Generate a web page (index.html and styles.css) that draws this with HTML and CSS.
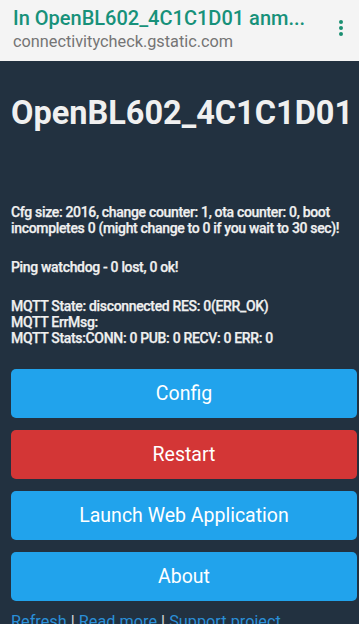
FILE: index.html
```html
<!DOCTYPE html>
<html>
<head>
<meta charset="utf-8">
<link rel="stylesheet" href="styles.css">
</head>
<body>
<header class="appbar">
  <div class="appbar-text">
    <div class="appbar-title">In OpenBL602_4C1C1D01 anm...</div>
    <div class="appbar-url">connectivitycheck.gstatic.com</div>
  </div>
  <div class="menu"><span></span><span></span><span></span></div>
</header>
<main class="page">
  <h1 class="title">OpenBL602_4C1C1D01</h1>
  <div class="info">
    <p>Cfg size: 2016, change counter: 1, ota counter: 0, boot incompletes 0 (might change to 0 if you wait to 30 sec)!</p>
    <p>Ping watchdog - 0 lost, 0 ok!</p>
    <p>MQTT State: disconnected RES: 0(ERR_OK)<br>MQTT ErrMsg:<br>MQTT Stats:CONN: 0 PUB: 0 RECV: 0 ERR: 0</p>
  </div>
  <div class="buttons">
    <a class="btn">Config</a>
    <a class="btn btn-red">Restart</a>
    <a class="btn">Launch Web Application</a>
    <a class="btn">About</a>
  </div>
  <div class="links"><a>Refresh</a> | <a>Read more</a> | <a>Support project</a></div>
</main>
</body>
</html>
```
FILE: styles.css
```css
html, body {
  margin: 0;
  padding: 0;
  background: #223140;
  font-family: Roboto, "Noto Sans", sans-serif;
  overflow: hidden;
}
.appbar {
  height: 61px;
  background: #f4f4f4;
  display: flex;
  align-items: flex-start;
  justify-content: space-between;
  padding: 0 0 0 13px;
  box-sizing: border-box;
}
.appbar-text {
  padding-top: 5px;
}
.appbar-title {
  color: #17917a;
  font-weight: 500;
  font-size: 20px;
  line-height: 26px;
}
.appbar-url {
  color: #757575;
  font-size: 16.3px;
  line-height: 22px;
}
.menu {
  display: flex;
  flex-direction: column;
  gap: 2px;
  padding: 20px 16px 0 0;
}
.menu span {
  width: 4px;
  height: 4px;
  border-radius: 50%;
  background: #1b8f72;
}
.page {
  padding: 0 2px 0 11px;
  color: #f0f0f0;
}
.title {
  margin: 0;
  padding-top: 32px;
  font-size: 32.5px;
  font-weight: 700;
  line-height: 40px;
  letter-spacing: 0;
  white-space: nowrap;
}
.info {
  margin-top: 71px;
  font-size: 14px;
  font-weight: 500;
  line-height: 16px;
  letter-spacing: -0.33px;
  -webkit-text-stroke: 0.25px #f0f0f0;
}
.info p {
  margin: 0 0 23px 0;
}
.buttons {
  display: flex;
  flex-direction: column;
  gap: 12px;
  margin-top: 0;
}
.btn {
  display: flex;
  align-items: center;
  justify-content: center;
  height: 49px;
  background: #21a3ec;
  color: #ffffff;
  font-size: 19.5px;
  border-radius: 5px;
}
.btn-red {
  background: #d33636;
}
.links {
  margin-top: 11px;
  color: #e0e0e0;
  font-size: 16.3px;
}
.links a {
  color: #2a8fd8;
}
```
